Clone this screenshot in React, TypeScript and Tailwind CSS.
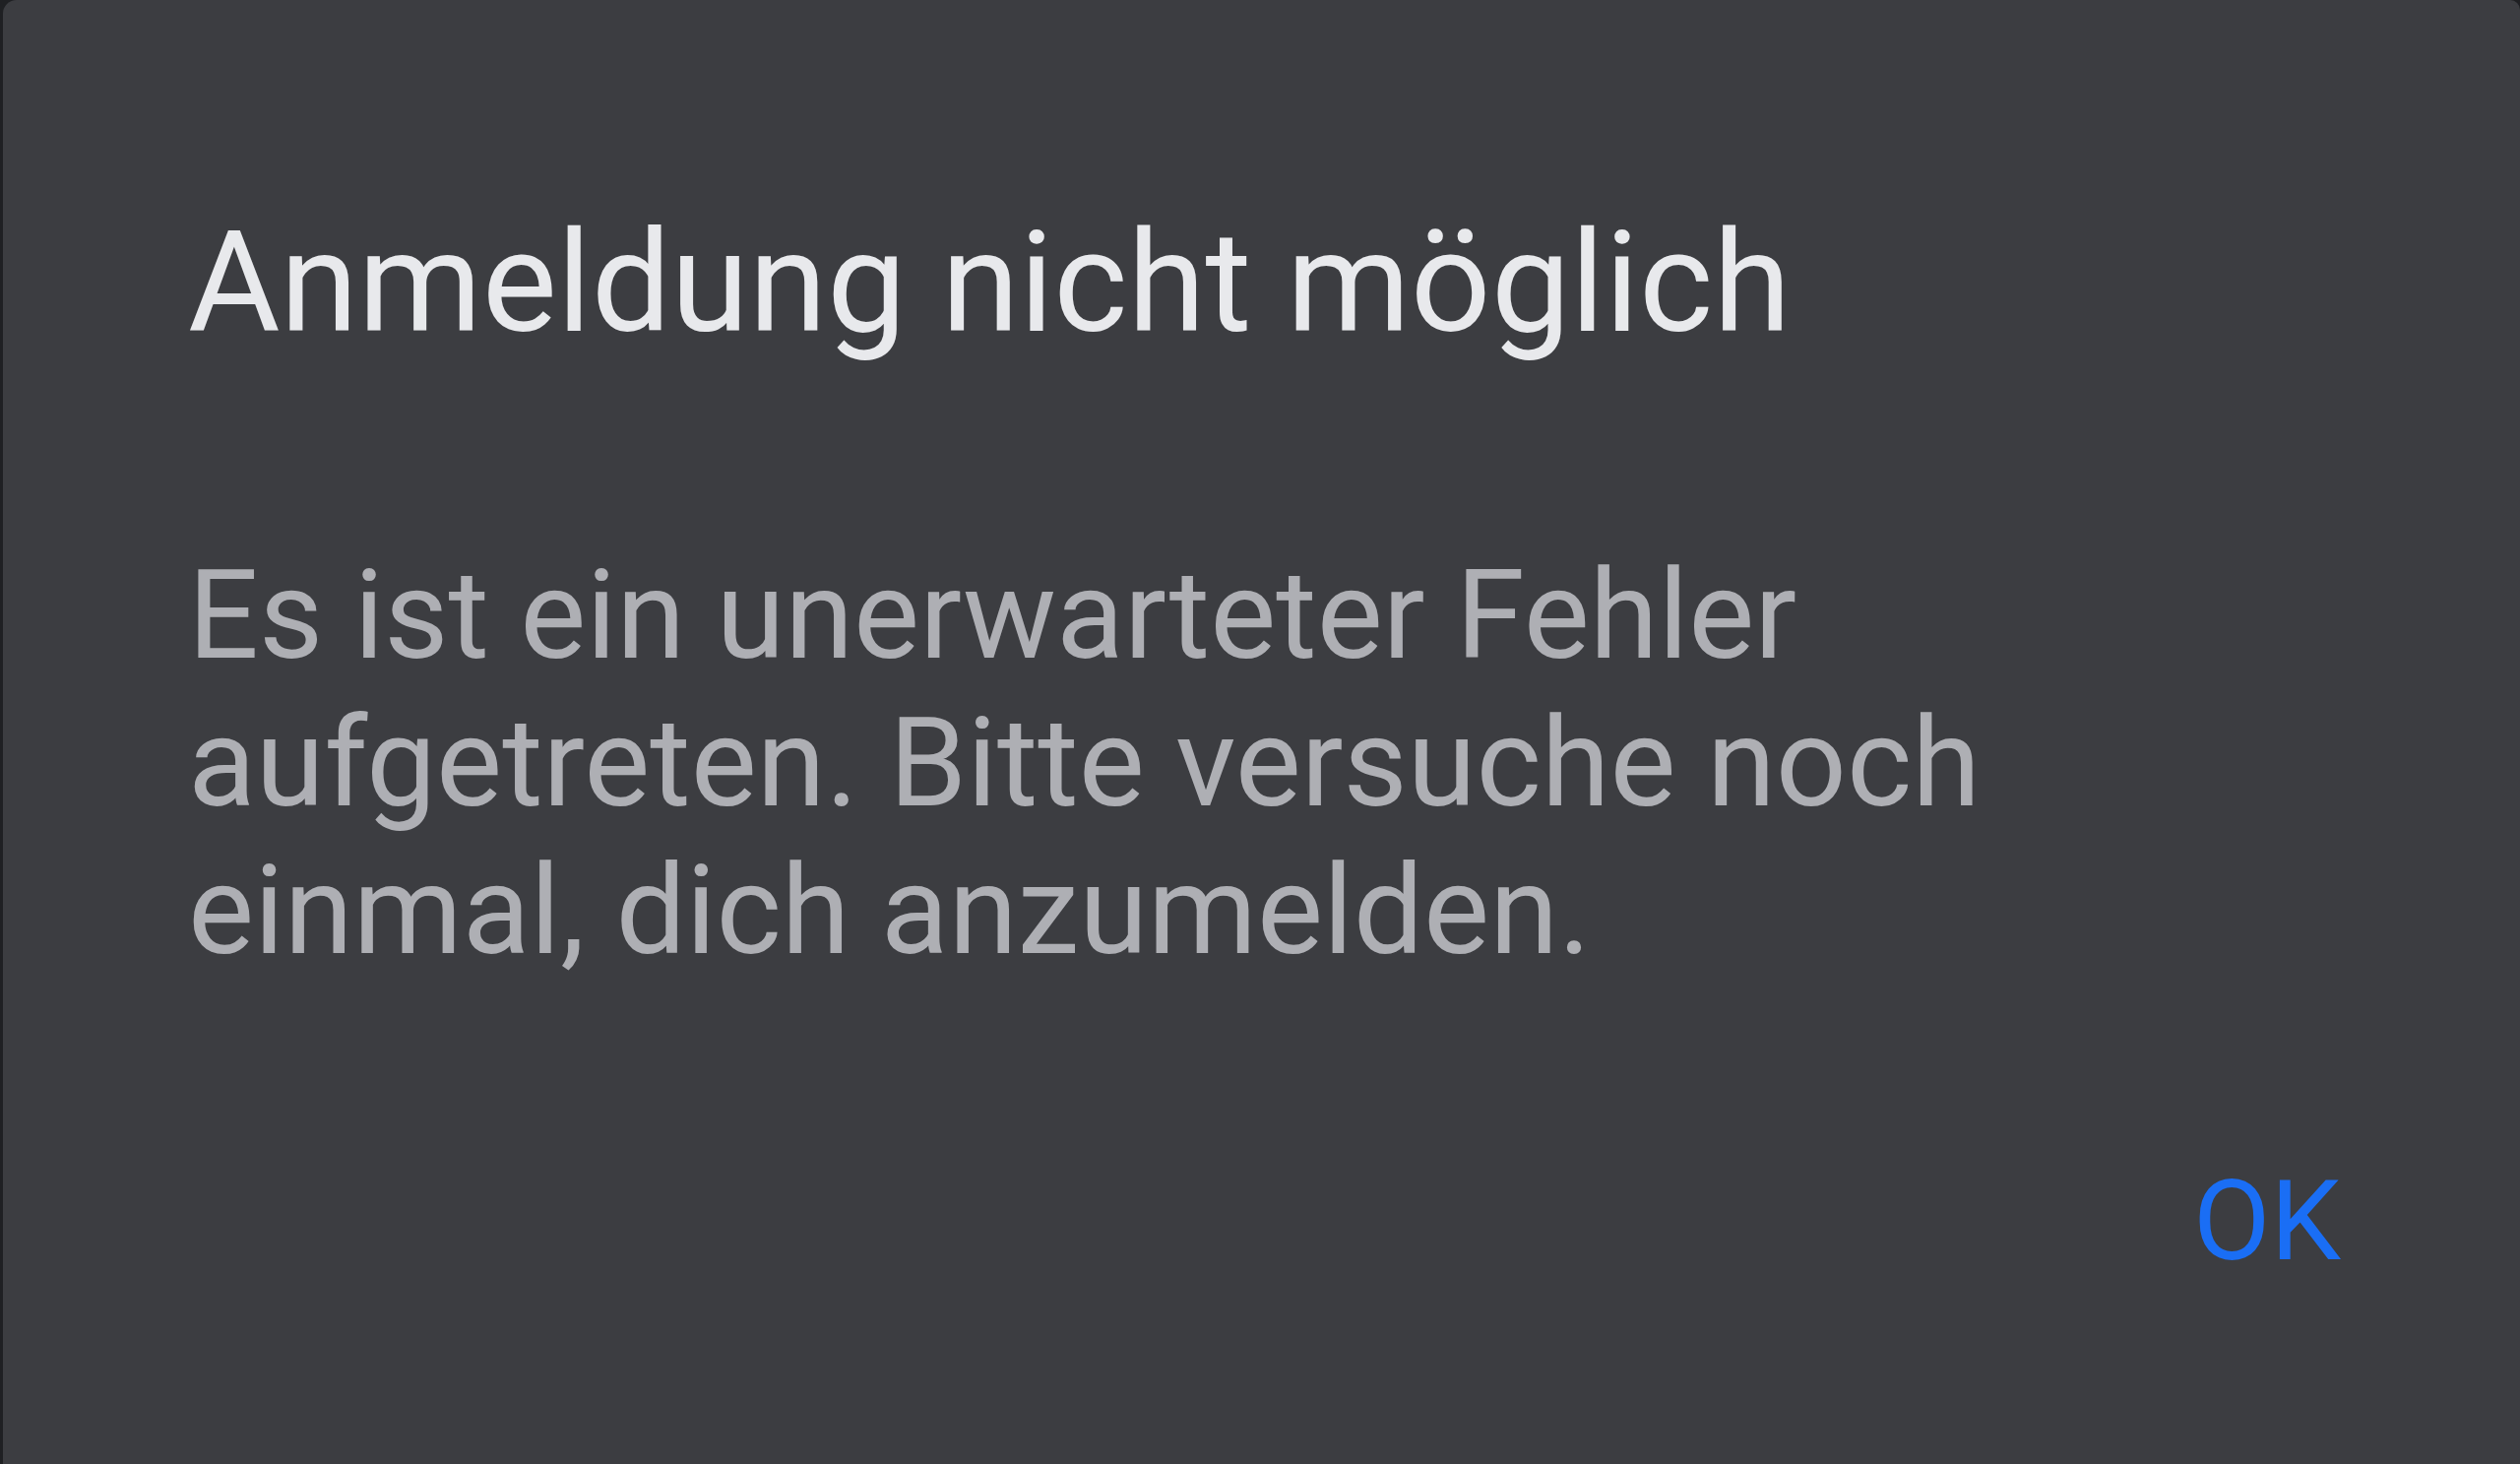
export default function App() {
  return (
    <div className="w-full h-[1487px] bg-[#1f2023] flex overflow-hidden" style={{ fontFamily: 'Roboto, "Noto Sans", sans-serif' }}>
      <div className="ml-[3px] flex-1 bg-[#3c3d41] rounded-tl-[14px] rounded-tr-[10px] pl-[188px] pr-[182px] pt-[216px] flex flex-col">
        <h1 className="text-[143.5px] leading-[143.5px] font-normal text-[#e8e9ec] whitespace-nowrap">Anmeldung nicht möglich</h1>
        <p className="mt-[190px] text-[126.5px] leading-[150px] text-[#aeafb4] max-w-[1900px]">
          Es ist ein unerwarteter Fehler aufgetreten. Bitte versuche noch einmal, dich anzumelden.
        </p>
        <div className="mt-[183px] flex justify-end">
          <button className="text-[114px] leading-[114px] text-[#1a6ef5]">OK</button>
        </div>
      </div>
    </div>
  );
}
